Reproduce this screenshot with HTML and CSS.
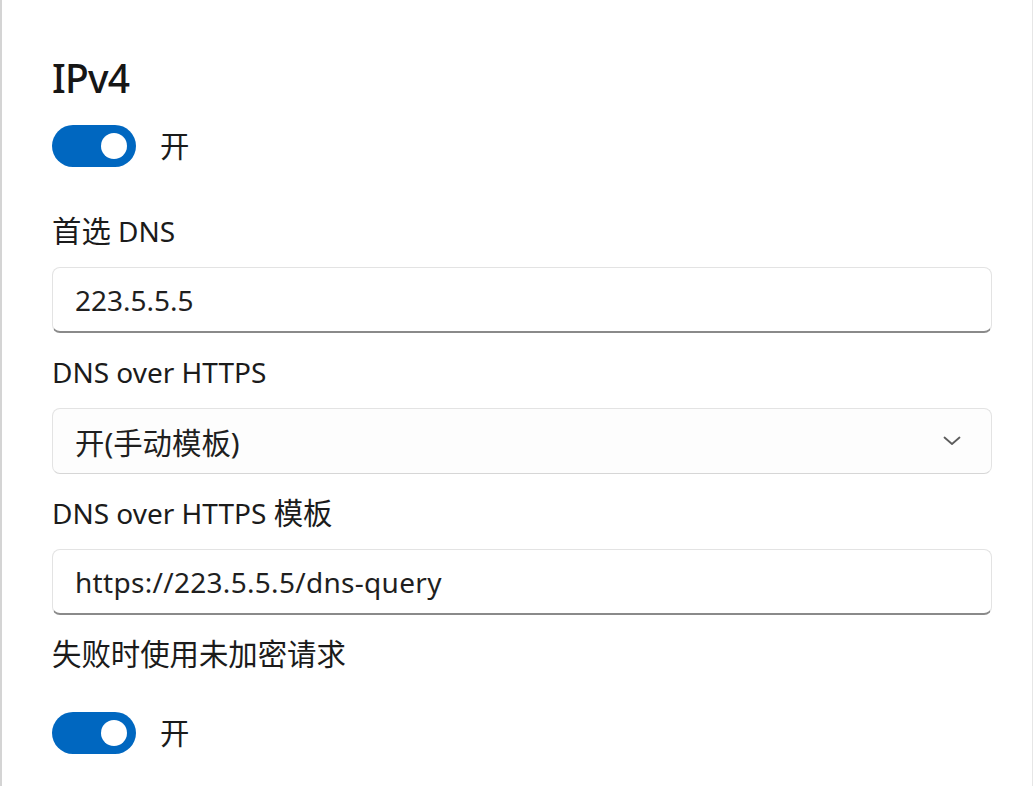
FILE: index.html
```html
<!DOCTYPE html>
<html lang="zh-CN">
<head>
<meta charset="utf-8">
<title>IPv4 DNS 设置</title>
<link rel="stylesheet" href="styles.css">
</head>
<body>
<div class="window">
  <h2 class="heading">IPv4</h2>
  <div class="toggle-row">
    <span class="toggle"><span class="knob"></span></span>
    <span class="toggle-text cjk">开</span>
  </div>

  <div class="field first">
    <div class="label"><span class="cjk">首选</span> DNS</div>
    <div class="textbox">223.5.5.5</div>
  </div>

  <div class="field">
    <div class="label">DNS over HTTPS</div>
    <div class="combo">
      <span class="cjk">开(手动模板)</span>
      <svg class="chevron" width="18" height="10" viewBox="0 0 18 10"><polyline points="1.5,1.5 9,8 16.5,1.5" fill="none" stroke="#5c5c5c" stroke-width="1.8" stroke-linecap="round" stroke-linejoin="round"/></svg>
    </div>
  </div>

  <div class="field">
    <div class="label">DNS over HTTPS <span class="cjk">模板</span></div>
    <div class="textbox url">https://223.5.5.5/dns-query</div>
  </div>

  <div class="field">
    <div class="label cjk">失败时使用未加密请求</div>
  </div>
  <div class="toggle-row last">
    <span class="toggle"><span class="knob"></span></span>
    <span class="toggle-text cjk">开</span>
  </div>
</div>
</body>
</html>
```

FILE: styles.css
```css
html, body {
  margin: 0;
  padding: 0;
  background: #ffffff;
}

body {
  font-family: "Noto Sans", "Noto Sans CJK SC", sans-serif;
  color: #1b1b1b;
}

.window {
  box-sizing: border-box;
  width: 1033px;
  height: 786px;
  border-left: 2px solid #d4d4d4;
  border-right: 1px solid #e6e6e6;
  padding: 0 40px 0 50px;
  display: flex;
  flex-direction: column;
  overflow: hidden;
}

.heading {
  margin: 52px 0 0 0;
  font-size: 39px;
  line-height: 52px;
  font-weight: 500;
  letter-spacing: -0.8px;
  color: #161616;
}

.toggle-row {
  display: flex;
  align-items: center;
  margin-top: 21px;
  gap: 24px;
}

.toggle-row.last {
  margin-top: 39px;
}

.toggle {
  box-sizing: border-box;
  width: 84px;
  height: 42px;
  border-radius: 21px;
  background: #0067c0;
  display: flex;
  align-items: center;
  justify-content: flex-end;
  padding-right: 9px;
}

.knob {
  width: 26px;
  height: 26px;
  border-radius: 50%;
  background: #ffffff;
}

.toggle-text {
  font-size: 28px;
  line-height: 38px;
  color: #1b1b1b;
}

.field {
  display: flex;
  flex-direction: column;
  margin-top: 20px;
}

.field.first {
  margin-top: 45px;
}

.label {
  font-size: 28px;
  line-height: 38px;
  height: 38px;
  color: #1b1b1b;
}

.textbox,
.combo {
  box-sizing: border-box;
  margin-top: 17px;
  height: 66px;
  border: 1px solid #e3e3e3;
  border-radius: 8px;
  background: #ffffff;
  padding: 0 22px;
  display: flex;
  align-items: center;
  font-size: 28px;
  color: #1f1f1f;
}

.textbox {
  border-bottom: 2px solid #8a8a8a;
}

.textbox.url {
  letter-spacing: 0.3px;
}

.combo {
  justify-content: space-between;
  border-bottom-color: #d6d6d6;
  padding-right: 30px;
  background: #fdfdfd;
}

.chevron {
  display: block;
}

.cjk,
.label.cjk,
.toggle-text.cjk {
  font-size: 29.4px;
}
```
